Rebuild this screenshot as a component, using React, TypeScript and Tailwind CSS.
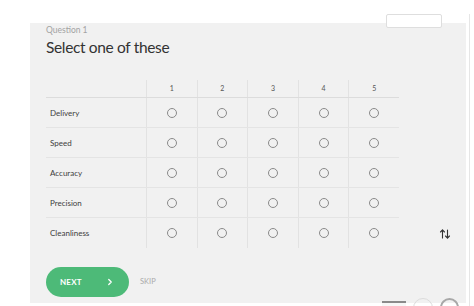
import { ArrowUpDown, ChevronRight } from 'lucide-react'

const columns = [1, 2, 3, 4, 5]
const rows = ['Delivery', 'Speed', 'Accuracy', 'Precision', 'Cleanliness']

function Radio() {
  return <span className="block w-[10px] h-[10px] rounded-full border border-[#8a8a8a]" />
}

export default function App() {
  return (
    <div className="relative w-[474px] h-[306px] overflow-hidden bg-white font-['Lato',sans-serif]">
      {/* panel */}
      <div className="ml-[30px] mt-[23px] w-[436px] h-[280px] bg-[#f1f1f1] pl-[16px] pr-[14px] pt-[1px]">
        <p className="text-[8.5px] leading-[12px] text-[#a3a3a3]">Question 1</p>
        <h1 className="mt-[1px] text-[15.5px] leading-[20px] tracking-[-0.35px] text-[#333]">Select one of these</h1>

        <div className="mt-[23px] flex items-end">
          <div className="w-[353px]">
            <div className="grid grid-cols-[100px_repeat(5,50.6px)] h-[18px] border-b border-[#dcdcdc]">
              <div />
              {columns.map((c) => (
                <div key={c} className="flex items-center justify-center border-l border-[#e2e2e2] text-[7px] text-[#555]">
                  {c}
                </div>
              ))}
            </div>
            {rows.map((r, i) => (
              <div
                key={r}
                className={`grid grid-cols-[100px_repeat(5,50.6px)] h-[30px] ${i < rows.length - 1 ? 'border-b border-[#e4e4e4]' : ''}`}
              >
                <div className="flex items-center pl-[4px] text-[8px] text-[#3d3d3d]">{r}</div>
                {columns.map((c) => (
                  <div key={c} className="flex items-center justify-center border-l border-[#e2e2e2]">
                    <Radio />
                  </div>
                ))}
              </div>
            ))}
          </div>
          <ArrowUpDown className="ml-auto mb-[8px] mr-[1px] w-[12px] h-[12px] text-[#333]" strokeWidth={2.2} />
        </div>

        <div className="mt-[19px] flex items-center">
          <button className="w-[83px] h-[30px] rounded-full bg-[#4dba78] flex items-center pl-[14px] pr-[14px] text-white">
            <span className="text-[8px] font-bold tracking-[0.2px]">NEXT</span>
            <ChevronRight className="ml-auto w-[10px] h-[10px]" strokeWidth={3} />
          </button>
          <span className="ml-[11px] text-[7.5px] text-[#aaa]">SKIP</span>
        </div>
      </div>

      {/* top-right box */}
      <div className="absolute left-[386px] top-[14px] w-[56px] h-[14px] rounded-[2px] border border-[#dedede] bg-white" />
      {/* right edge line */}
      <div className="absolute left-[469px] top-[14px] w-px h-[292px] bg-[#e6e6e6]" />
      {/* bottom right controls */}
      <div className="absolute left-[382px] top-[301px] w-[24px] h-[10px] border-t-2 border-[#8a8a8a] bg-[#f7f7f7]" />
      <div className="absolute left-[413px] top-[298px] w-[20px] h-[20px] rounded-full border border-[#dcdcdc]" />
      <div className="absolute left-[440px] top-[298px] w-[19px] h-[19px] rounded-full border-2 border-[#a8a8a8]" />
    </div>
  )
}
